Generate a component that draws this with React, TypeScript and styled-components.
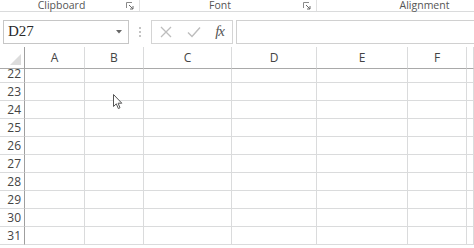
import * as React from "react"
import styled, { createGlobalStyle } from "styled-components"

const GlobalStyle = createGlobalStyle`
  html, body {
    margin: 0;
    padding: 0;
    background: #ffffff;
    overflow: hidden;
  }
  * {
    box-sizing: border-box;
  }
`

const Page = styled.div`
  position: relative;
  width: 474px;
  height: 248px;
  overflow: hidden;
  background: #ffffff;
  font-family: "Open Sans", "Noto Sans", sans-serif;
`

// ribbon group labels along the top edge
const RibbonLabels = styled.div`
  display: grid;
  grid-template-columns: 140px 177px 1fr;
  height: 12px;
  border-bottom: 1px solid #dadbdc;
`

const Group = styled.div<{ last?: boolean }>`
  position: relative;
  display: flex;
  justify-content: center;
  align-items: flex-end;
  height: 11px;
  border-right: ${props => (props.last ? "none" : "1px solid #e1e1e1")};
`

const GroupLabel = styled.span<{ shift?: number }>`
  font-size: 10.5px;
  line-height: 11px;
  color: #555;
  transform: translateX(${props => props.shift || 0}px);
`

const Launcher = styled.svg`
  position: absolute;
  right: 5px;
  top: 2px;
`

const FormulaBar = styled.div`
  display: flex;
  align-items: center;
  height: 35px;
  padding: 7px 0 3px 3px;
`

const NameBox = styled.div`
  display: flex;
  align-items: center;
  justify-content: space-between;
  width: 126px;
  height: 24px;
  border: 1px solid #c6c6c6;
  padding: 0 6px 0 4px;
  font-family: "Liberation Serif", serif;
  font-size: 15px;
  color: #2a2a2a;
`

const Grip = styled.div`
  display: flex;
  flex-direction: column;
  gap: 2px;
  margin: 0 10px 0 10px;
  span {
    width: 2px;
    height: 2px;
    background: #c4c4c4;
  }
`

const FxButtons = styled.div`
  display: flex;
  align-items: center;
  justify-content: space-between;
  width: 82px;
  height: 24px;
  border: 1px solid #d4d4d4;
  padding: 0 8px 0 8px;
`

const Fx = styled.span`
  font-family: "Liberation Serif", serif;
  font-style: italic;
  font-size: 15px;
  color: #555;
  letter-spacing: -1px;
`

const FormulaInput = styled.div`
  flex: 1;
  height: 24px;
  margin-left: 3px;
  border: 1px solid #d0d0d0;
  border-right: none;
`

const Grid = styled.div`
  display: grid;
  grid-template-columns: 25px 60px 59px 88px 85px 91px 59px 1fr;
  grid-auto-rows: 18px;
`

const ColHead = styled.div<{ corner?: boolean }>`
  position: relative;
  height: 22px;
  display: flex;
  align-items: center;
  justify-content: center;
  font-size: 12px;
  color: #444;
  border-right: 1px solid ${props => (props.corner ? "#9f9f9f" : "#dadbdc")};
  border-bottom: 1px solid #a9a9a9;
`

const Corner = styled.svg`
  position: absolute;
  right: 3px;
  bottom: 3px;
`

const RowHead = styled.div`
  display: flex;
  align-items: center;
  justify-content: flex-end;
  padding-right: 3px;
  font-size: 12px;
  color: #444;
  border-right: 1px solid #9f9f9f;
  border-bottom: 1px solid #dadbdc;
`

const Cell = styled.div`
  border-right: 1px solid #dadbdc;
  border-bottom: 1px solid #dadbdc;
`

const Pointer = styled.svg`
  position: absolute;
  left: 113px;
  top: 94px;
`

const columns = ["A", "B", "C", "D", "E", "F", ""]
const rows = [22, 23, 24, 25, 26, 27, 28, 29, 30, 31]

const LauncherIcon = () => (
  <Launcher width="8" height="8" viewBox="0 0 8 8">
    <path d="M0.5 6V0.5H6" fill="none" stroke="#8a8a8a" strokeWidth="1" />
    <path d="M3 3L7 7M4 7H7V4" fill="none" stroke="#6a6a6a" strokeWidth="1" />
  </Launcher>
)

export default function App() {
  return (
    <Page>
      <GlobalStyle />
      <RibbonLabels>
        <Group>
          <GroupLabel shift={-8}>Clipboard</GroupLabel>
          <LauncherIcon />
        </Group>
        <Group>
          <GroupLabel shift={-8}>Font</GroupLabel>
          <LauncherIcon />
        </Group>
        <Group last>
          <GroupLabel shift={29}>Alignment</GroupLabel>
        </Group>
      </RibbonLabels>

      <FormulaBar>
        <NameBox>
          <span>D27</span>
          <svg width="6" height="4" viewBox="0 0 6 4">
            <path d="M0 0H6L3 3.5Z" fill="#666" />
          </svg>
        </NameBox>
        <Grip>
          <span />
          <span />
          <span />
        </Grip>
        <FxButtons>
          <svg width="12" height="12" viewBox="0 0 12 12">
            <path d="M1 1L11 11M11 1L1 11" stroke="#bdbdbd" strokeWidth="1.3" />
          </svg>
          <svg width="14" height="12" viewBox="0 0 14 12">
            <path d="M1 6.5L5 10.5L13 1.5" fill="none" stroke="#bdbdbd" strokeWidth="1.4" />
          </svg>
          <Fx>fx</Fx>
        </FxButtons>
        <FormulaInput />
      </FormulaBar>

      <Grid>
        <ColHead corner>
          <Corner width="11" height="11" viewBox="0 0 11 11">
            <path d="M11 0V11H0Z" fill="#dcdcdc" />
          </Corner>
        </ColHead>
        {columns.map((c, i) => (
          <ColHead key={i}>{c}</ColHead>
        ))}
        {rows.map(r => (
          <React.Fragment key={r}>
            <RowHead>{r}</RowHead>
            {columns.map((_, i) => (
              <Cell key={i} />
            ))}
          </React.Fragment>
        ))}
      </Grid>

      <Pointer width="10" height="16" viewBox="0 0 10 16">
        <path
          d="M0.5 0.5V12.5L3.3 9.8L5.3 14.5L7 13.8L5.1 9.2H8.8Z"
          fill="#ffffff"
          stroke="#555"
          strokeWidth="1"
          strokeLinejoin="round"
        />
      </Pointer>
    </Page>
  )
}
